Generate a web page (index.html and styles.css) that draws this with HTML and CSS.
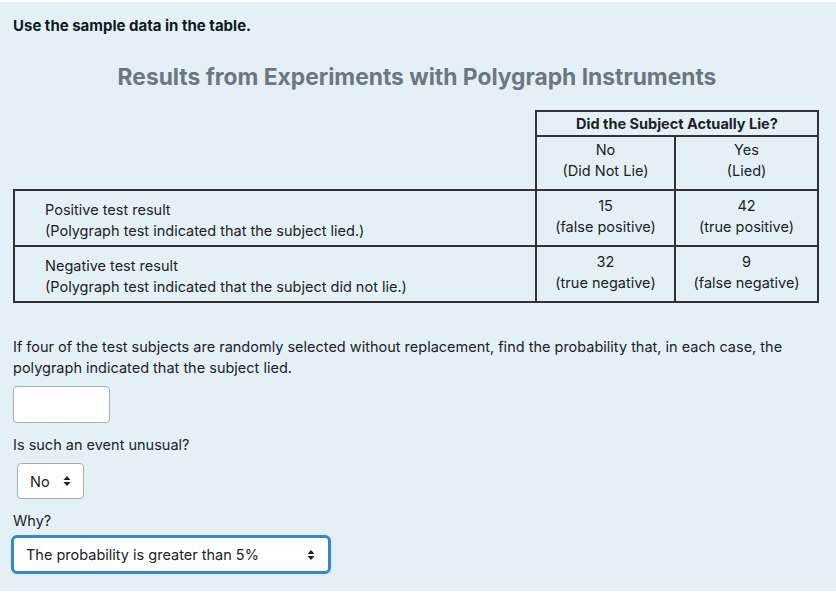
FILE: index.html
```html
<!DOCTYPE html>
<html lang="en">
<head>
    <meta charset="UTF-8">
    <title>Polygraph question</title>
    <link rel="stylesheet" href="styles.css">
</head>
<body>

    <div class="question">
        <p class="intro">Use the sample data in the table.</p>

        <h2 class="table-title">Results from Experiments with Polygraph Instruments</h2>

        <table class="results">
            <colgroup>
                <col class="col-label">
                <col class="col-no">
                <col class="col-yes">
            </colgroup>
            <thead>
                <tr class="head-main">
                    <td class="blank"></td>
                    <th colspan="2">Did the Subject Actually Lie?</th>
                </tr>
                <tr class="head-sub">
                    <td class="blank"></td>
                    <td>No<br>(Did Not Lie)</td>
                    <td>Yes<br>(Lied)</td>
                </tr>
            </thead>
            <tbody>
                <tr>
                    <td class="label">Positive test result<br>(Polygraph test indicated that the subject lied.)</td>
                    <td>15<br>(false positive)</td>
                    <td>42<br>(true positive)</td>
                </tr>
                <tr>
                    <td class="label">Negative test result<br>(Polygraph test indicated that the subject did not lie.)</td>
                    <td>32<br>(true negative)</td>
                    <td>9<br>(false negative)</td>
                </tr>
            </tbody>
        </table>

        <p class="prompt">If four of the test subjects are randomly selected without replacement, find the probability that, in each case, the polygraph indicated that the subject lied.</p>

        <input class="answer" type="text" aria-label="answer">

        <p class="label-line">Is such an event unusual?</p>
        <div class="select-wrap small">
            <select class="choice">
                <option>No</option>
                <option>Yes</option>
            </select>
            <svg class="arrows" width="8" height="12" viewBox="0 0 8 12"><path d="M4 1 L7.5 5 H0.5 Z M4 11 L7.5 7 H0.5 Z" fill="#1d2125"/></svg>
        </div>

        <p class="label-line">Why?</p>
        <div class="select-wrap wide">
            <select class="choice">
                <option>The probability is greater than 5%</option>
                <option>The probability is less than 5%</option>
            </select>
            <svg class="arrows" width="8" height="12" viewBox="0 0 8 12"><path d="M4 1 L7.5 5 H0.5 Z M4 11 L7.5 7 H0.5 Z" fill="#1d2125"/></svg>
        </div>
    </div>

</body>
</html>
```

FILE: styles.css
```css
body {
    margin: 0;
    padding-top: 2px;
    background-color: #ffffff;
    font-family: 'Inter', 'Liberation Sans', sans-serif;
    color: #1d2125;
}
.question {
    background-color: #e3f1f6;
    padding: 13px 13px 16px 13px;
    height: 589px;
    box-sizing: border-box;
    font-size: 14.5px;
    line-height: 21px;
}
p {
    margin: 0;
}
.intro {
    font-size: 15px;
    font-weight: bold;
    color: #0f1a1e;
}
.table-title {
    margin: 28px 0 0 0;
    text-align: center;
    font-size: 22.8px;
    line-height: 26px;
    font-weight: bold;
    color: #6b7880;
    padding-right: 2px;
}
.results {
    margin-top: 20px;
    width: 806px;
    table-layout: fixed;
    border-collapse: collapse;
}
.col-label {
    width: 522px;
}
.col-no {
    width: 139px;
}
.results th,
.results td {
    border: 2px solid #333333;
    text-align: center;
    padding: 4px 4px 8px 4px;
}
.results td.blank {
    border: none;
}
.head-main th {
    padding: 1px 4px 1px 4px;
    font-weight: bold;
}
.head-sub td {
    padding: 2px 4px 8px 4px;
}
.results td.label {
    text-align: left;
    padding: 8px 4px 4px 30px;
}
.prompt {
    margin-top: 33px;
}
.answer {
    display: block;
    margin-top: 8px;
    width: 97px;
    height: 37px;
    box-sizing: border-box;
    border: 1px solid #a9aeb3;
    border-radius: 4px;
    background-color: #ffffff;
}
.label-line {
    margin-top: 11px;
}
.select-wrap {
    position: relative;
    width: max-content;
    margin-top: 8px;
}
.choice {
    appearance: none;
    -webkit-appearance: none;
    display: block;
    box-sizing: border-box;
    border: 1px solid #a9aeb3;
    border-radius: 4px;
    background-color: #ffffff;
    font-family: inherit;
    font-size: 14.5px;
    color: #1d2125;
}
.small {
    margin-left: 4px;
}
.small .choice {
    width: 67px;
    height: 36px;
    padding: 0 0 0 12px;
}
.small .arrows {
    position: absolute;
    right: 13px;
    top: 12px;
}
.wide {
    margin-top: 4px;
    margin-left: -2px;
}
.wide .choice {
    width: 320px;
    height: 39px;
    padding: 0 0 0 12px;
    border: 3px solid #2f86dc;
    border-radius: 6px;
}
.wide .arrows {
    position: absolute;
    right: 16px;
    top: 14px;
}
```
